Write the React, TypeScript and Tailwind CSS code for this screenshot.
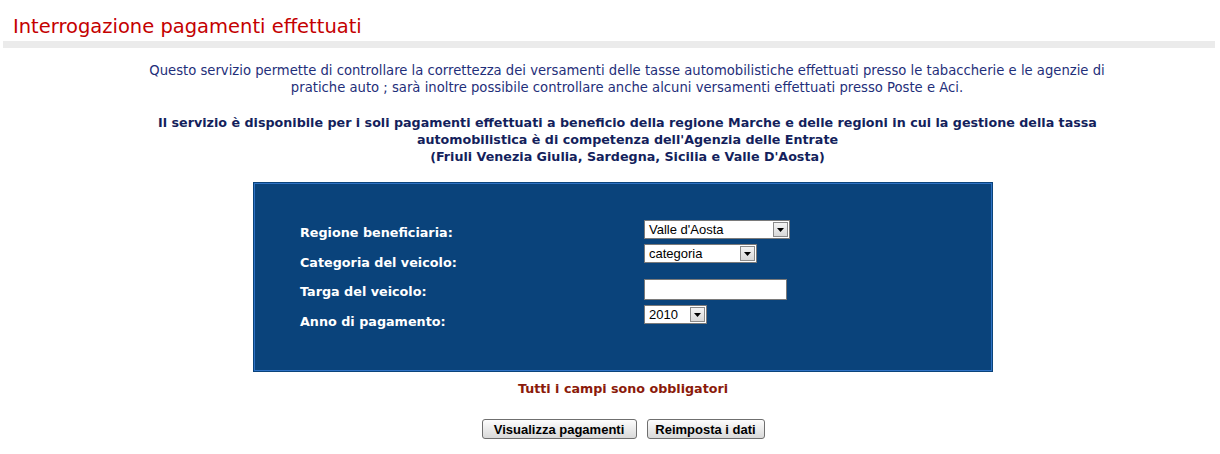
import React from 'react'

const verdana = "font-['DejaVu_Sans',Verdana,sans-serif]"
const arial = "font-['Liberation_Sans',Arial,sans-serif]"

function Arrow() {
  return (
    <span className="flex h-[15px] w-[15px] items-center justify-center border border-[#8a8a8a] bg-gradient-to-b from-[#f4f4f4] to-[#d8d8d8]">
      <svg width="7" height="4" viewBox="0 0 7 4">
        <path d="M0 0h7L3.5 4z" fill="#000" />
      </svg>
    </span>
  )
}

function FakeSelect({ value, width }: { value: string; width: number }) {
  return (
    <div
      className={`flex h-[19px] items-center justify-between border border-[#7a7a7a] bg-white pl-[4px] pr-px text-[13px] leading-none text-black ${arial}`}
      style={{ width }}
    >
      <span>{value}</span>
      <Arrow />
    </div>
  )
}

function Label({ children }: { children: React.ReactNode }) {
  return <div className={`text-[12.75px] font-bold leading-[16px] text-white ${verdana}`}>{children}</div>
}

export default function App() {
  return (
    <div className="h-[454px] w-[1220px] overflow-hidden bg-white">
      <h1 className={`pl-[13px] pt-[15px] text-[19.5px] leading-[24px] text-[#c40000] ${verdana}`}>
        Interrogazione pagamenti effettuati
      </h1>
      <div className="ml-[3px] mt-[2px] h-[7px] w-[1212px] bg-[#ebebeb]" />

      <p className={`mt-[14px] pl-[34px] text-center text-[13.2px] leading-[17px] text-[#1f2f7a] ${verdana}`}>
        Questo servizio permette di controllare la correttezza dei versamenti delle tasse automobilistiche effettuati presso le tabaccherie e le agenzie di
        <br />
        pratiche auto ; sarà inoltre possibile controllare anche alcuni versamenti effettuati presso Poste e Aci.
      </p>

      <p className={`mt-[18px] pl-[35px] text-center text-[12.7px] font-bold leading-[17px] text-[#141f5c] ${verdana}`}>
        Il servizio è disponibile per i soli pagamenti effettuati a beneficio della regione Marche e delle regioni in cui la gestione della tassa
        <br />
        automobilistica è di competenza dell'Agenzia delle Entrate
        <br />
        (Friuli Venezia Giulia, Sardegna, Sicilia e Valle D'Aosta)
      </p>

      <div className="ml-[253px] mt-[17px] h-[190px] w-[740px] border border-[#0a437b] bg-[#0a437b]">
        <div className="h-full w-full border border-[#2f72c4] pl-[45px] pt-[34px]">
          <div className="flex h-[26px]">
            <div className="w-[344px] pt-[7px]"><Label>Regione beneficiaria:</Label></div>
            <div className="pt-[2px]"><FakeSelect value="Valle d'Aosta" width={146} /></div>
          </div>
          <div className="flex h-[30px]">
            <div className="w-[344px] pt-[11px]"><Label>Categoria del veicolo:</Label></div>
            <div><FakeSelect value="categoria" width={113} /></div>
          </div>
          <div className="flex h-[29px]">
            <div className="w-[344px] pt-[10px]"><Label>Targa del veicolo:</Label></div>
            <div className="pt-[5px]">
              <div className="h-[21px] w-[143px] border border-[#7a7a7a] bg-white" />
            </div>
          </div>
          <div className="flex h-[30px]">
            <div className="w-[344px] pt-[11px]"><Label>Anno di pagamento:</Label></div>
            <div className="pt-[2px]"><FakeSelect value="2010" width={63} /></div>
          </div>
        </div>
      </div>

      <div className={`mt-[9px] pl-[26px] text-center text-[12.7px] font-bold leading-[16px] text-[#8b1a0a] ${verdana}`}>
        Tutti i campi sono obbligatori
      </div>

      <div className="mt-[22px] flex justify-center gap-[10px] pl-[26px]">
        <button className={`h-[20px] w-[155px] rounded-[3px] border border-[#6f6f6f] bg-gradient-to-b from-[#fdfdfd] to-[#d9d9d9] text-[13px] font-bold leading-none text-black ${arial}`}>
          Visualizza pagamenti
        </button>
        <button className={`h-[20px] w-[118px] rounded-[3px] border border-[#6f6f6f] bg-gradient-to-b from-[#fdfdfd] to-[#d9d9d9] text-[13px] font-bold leading-none text-black ${arial}`}>
          Reimposta i dati
        </button>
      </div>
    </div>
  )
}
